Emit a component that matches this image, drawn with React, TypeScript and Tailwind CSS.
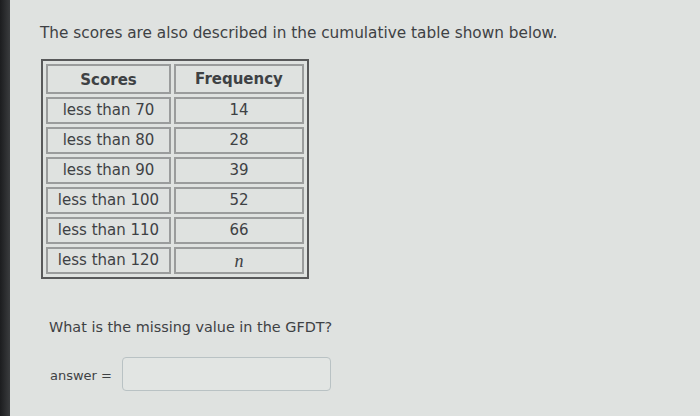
import React from "react";

const rows = [
  ["less than 70", "14"],
  ["less than 80", "28"],
  ["less than 90", "39"],
  ["less than 100", "52"],
  ["less than 110", "66"],
];

export default function App() {
  return (
    <div className="flex h-[416px] w-[700px] overflow-hidden bg-[#dfe2e0] font-['DejaVu_Sans',sans-serif] text-[#3e4144]">
      <div className="w-[10px] shrink-0 bg-gradient-to-r from-[#1c1d1f] to-[#3a3c3e]" />
      <div className="flex-1 pl-[30px] pt-[19px]">
        <p className="text-[15.3px] leading-[28px]">
          The scores are also described in the cumulative table shown below.
        </p>

        <table className="ml-[1px] mt-[12px] border-separate border-spacing-[3px] border-2 border-[#58595a] text-[15px]">
          <thead>
            <tr>
              <th className="h-[30px] w-[125px] border-2 border-[#9a9c9c] pt-[3px] font-bold leading-none text-[#3e4144]">Scores</th>
              <th className="h-[30px] w-[130px] border-2 border-[#9a9c9c] font-bold leading-none text-[#3e4144]">Frequency</th>
            </tr>
          </thead>
          <tbody>
            {rows.map(([s, f]) => (
              <tr key={s}>
                <td className="h-[27px] border-2 border-[#9a9c9c] text-center leading-none">{s}</td>
                <td className="h-[27px] border-2 border-[#9a9c9c] text-center leading-none">{f}</td>
              </tr>
            ))}
            <tr>
              <td className="h-[27px] border-2 border-[#9a9c9c] text-center leading-none">less than 120</td>
              <td className="h-[27px] border-2 border-[#9a9c9c] text-center font-['Liberation_Serif',serif] text-[18px] italic leading-none">n</td>
            </tr>
          </tbody>
        </table>

        <p className="mt-[38px] pl-[9px] text-[14.4px]">What is the missing value in the GFDT?</p>

        <div className="mt-[18px] flex items-center pl-[10px]">
          <span className="w-[72px] pt-[4px] text-[13px]">answer =</span>
          <input
            type="text"
            className="h-[34px] w-[209px] rounded-[4px] border border-[#b9c2c4] bg-[#e2e5e3]"
          />
        </div>
      </div>
    </div>
  );
}
